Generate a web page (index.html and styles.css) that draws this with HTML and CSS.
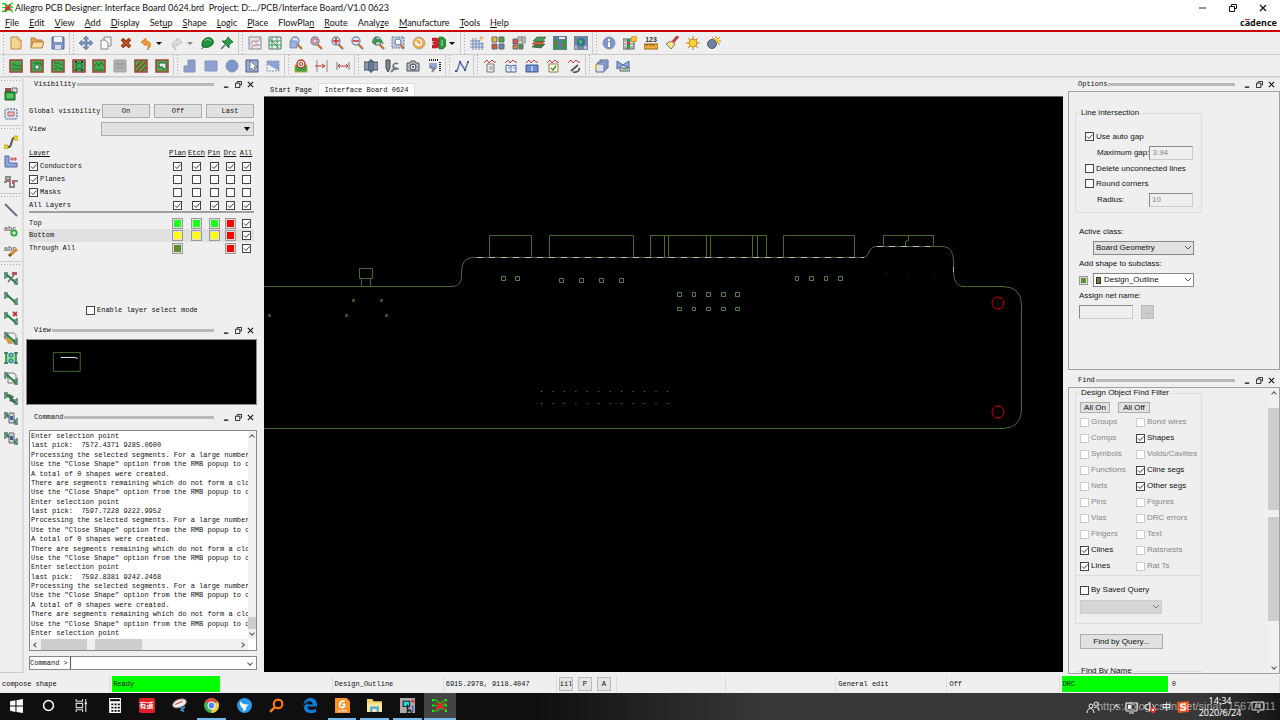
FILE: index.html
```html
<!DOCTYPE html>
<html lang="en">
<head>
    <meta charset="UTF-8">
    <meta name="viewport" content="width=device-width, initial-scale=1.0">
    <title>Allegro PCB Designer</title>
    <link rel="stylesheet" href="styles.css">
</head>
<body>

<!-- icon set -->
<svg class="defs" aria-hidden="true">
    <symbol id="logo" viewBox="0 0 14 14"><path d="M1 2h3l3 3 5-3M1 7h3l4 3h5M1 12h4l8-7" fill="none" stroke="#19b219" stroke-width="1.5"/><path d="M3 3l4 3 5-4-2 5 3 5-5-3-6 4 3-6z" fill="#e3262b"/><path d="M0 1h2v2H0zM0 6h2v2H0zM0 11h2v2H0zM12 1h2v2h-2zM12 6h2v2h-2zM12 11h2v2h-2z" fill="#0f0"/></symbol>
    <symbol id="new" viewBox="0 0 14 14"><path d="M2 1h7l3 3v9H2z" fill="#f7d492" stroke="#b98a45"/><path d="M9 1v3h3" fill="#fff" stroke="#b98a45"/></symbol>
    <symbol id="open" viewBox="0 0 14 14"><path d="M1 12V2h4l1 2h6v3" fill="#e3a85c" stroke="#b5813d"/><path d="M3 6h11l-2 6H1z" fill="#fbdca4" stroke="#b5813d"/></symbol>
    <symbol id="save" viewBox="0 0 14 14"><path d="M1 1h12v12H1z" fill="#7d93c4" stroke="#596c9a"/><path d="M3 1h8v5H3z" fill="#eef2fa"/><path d="M4 9h6v4H4z" fill="#dde"/></symbol>
    <symbol id="move" viewBox="0 0 14 14"><path d="M7 0l3 3H8v3h3V4l3 3-3 3V8H8v3h2l-3 3-3-3h2V8H3v2L0 7l3-3v2h3V3H4z" fill="#7693b8" stroke="#49668e" stroke-width=".5"/></symbol>
    <symbol id="copy" viewBox="0 0 14 14"><path d="M5 1h7v9H5z" fill="#eee" stroke="#888"/><path d="M2 4h4l3 3v6H2z" fill="#fafafa" stroke="#888"/></symbol>
    <symbol id="delete" viewBox="0 0 14 14"><path d="M3 3l8 8M11 3l-8 8" stroke="#6d2408" stroke-width="3.6"/><path d="M3 3l8 8M11 3l-8 8" stroke="#c5531f" stroke-width="1.8"/></symbol>
    <symbol id="undo" viewBox="0 0 14 14"><path d="M2 6l5-4v3c6 0 6 6 1 9 2-4 1-6-1-6v2z" fill="#f09a3e" stroke="#bb6a1c" stroke-width=".6"/></symbol>
    <symbol id="redo" viewBox="0 0 14 14"><path d="M12 6L7 2v3c-6 0-6 6-1 9-2-4-1-6 1-6v2z" fill="#ddd" stroke="#aaa" stroke-width=".6"/></symbol>
    <symbol id="fix" viewBox="0 0 14 14"><path d="M4 11l-3 2" stroke="#666"/><path d="M2 8c0-4 4-7 8-6 4 1 4 5 2 7-3 3-8 3-10 1z" fill="#219440" stroke="#125c26"/><path d="M5 5c1-2 4-2 6 0" fill="none" stroke="#8be29d"/></symbol>
    <symbol id="pin" viewBox="0 0 14 14"><path d="M5 9l-4 4" stroke="#666" stroke-width="1.4"/><path d="M8 1l5 5-2 1-2 2v3L2 5h3l2-2z" fill="#2aa04a" stroke="#125c26" stroke-width=".8"/></symbol>
    <symbol id="grid-red" viewBox="0 0 14 14"><path d="M1 1h12v12H1z" fill="#eceff4" stroke="#7a8696"/><path d="M4 1v12M8 1v12M1 5h12M1 9h12" stroke="#aab6c6" stroke-width=".6"/><path d="M2 8l3-3 4 1 3-4M3 12l4-3h5" fill="none" stroke="#d08080"/></symbol>
    <symbol id="grid-green" viewBox="0 0 14 14"><path d="M1 1h12v12H1z" fill="#eef5ee" stroke="#5a6e78"/><path d="M4 1v12M9 1v12M1 5h12M1 9h12M2 3l9 9" stroke="#3c9b56"/></symbol>
    <symbol id="lens" viewBox="0 0 14 14"><path d="M8 8l5 5" stroke="#c0733a" stroke-width="2.4"/><circle cx="6" cy="5" r="4" fill="#dce9f8" stroke="#7d8cab" stroke-width="1.4"/></symbol>
    <symbol id="zoom-area" viewBox="0 0 14 14"><use href="#lens"/><path d="M1 5h7v7H1z" fill="#9db5dc" stroke="#5d78ab" stroke-width=".7"/></symbol>
    <symbol id="zoom-fit" viewBox="0 0 14 14"><use href="#lens"/><path d="M4 3h4v4H4z" fill="none" stroke="#cc3f4f"/></symbol>
    <symbol id="zoom-in" viewBox="0 0 14 14"><use href="#lens"/><path d="M6 2v6M3 5h6" stroke="#d22" stroke-width="1.5"/></symbol>
    <symbol id="zoom-out" viewBox="0 0 14 14"><use href="#lens"/><path d="M3 5h6" stroke="#d22" stroke-width="1.5"/></symbol>
    <symbol id="zoom-prev" viewBox="0 0 14 14"><use href="#lens"/><path d="M1 6l4-5v2c5 0 7 2 7 5-2-2-4-2-7-2v3z" fill="#36a04b" stroke="#1d6d2e" stroke-width=".5"/></symbol>
    <symbol id="zoom-sel" viewBox="0 0 14 14"><path d="M1 1h12v11H1z" fill="#b9c9dc" stroke="#6a7d96" stroke-dasharray="2 1"/><circle cx="7" cy="6" r="3" fill="#fff" stroke="#6680aa"/><path d="M9 8l4 5" stroke="#c0733a" stroke-width="2"/></symbol>
    <symbol id="redraw" viewBox="0 0 14 14"><circle cx="7" cy="7" r="6" fill="#f2a64c" stroke="#b9a58c"/><path d="M4 5v3h3M4 8a3 3 0 101-4" fill="none" stroke="#fff" stroke-width="1.4"/></symbol>
    <symbol id="three-d" viewBox="0 0 14 14"><path d="M0 2h5l2 1v3L6 7l1 1v3l-2 1H0v-3h3V8H1V6h2V5H0z" fill="#d3202a" stroke="#8d1219" stroke-width=".5"/><path d="M7 1h4l3 3v6l-3 3H7z" fill="#28953d" stroke="#155d24" stroke-width=".5"/><path d="M10 4v6" stroke="#9bdca8" stroke-width="1.2"/></symbol>
    <symbol id="grid-new" viewBox="0 0 14 14"><path d="M3 2v12M6 2v12M9 4v10M12 6v8M0 5h10M0 8h14M0 11h14" stroke="#6b86b9"/><path d="M11 0v5M9 2h5" stroke="#f2a64c"/></symbol>
    <symbol id="palette" viewBox="0 0 14 14"><path d="M1 1h5v5H1z" fill="#e8c028" stroke="#666"/><path d="M8 1h5v5H8z" fill="#4da64d" stroke="#666"/><path d="M1 8h5v5H1z" fill="#cc5d3c" stroke="#666"/><path d="M8 8h5v5H8z" fill="#6883bd" stroke="#666"/></symbol>
    <symbol id="palette-off" viewBox="0 0 14 14"><path d="M1 3h5v5H1z" fill="#d65151" stroke="#666"/><path d="M1 9h5v4H1z" fill="#cc8a3c" stroke="#666"/><path d="M7 8h4v5H7z" fill="#3fa050" stroke="#666"/><path d="M6 0h4v5H6zM10 1h4v6h-4z" fill="#b5b5b5" stroke="#999"/></symbol>
    <symbol id="layers" viewBox="0 0 14 14"><path d="M0 11l4-3h9l-4 4z" fill="#3a7a44" stroke="#254e2b" stroke-width=".6"/><path d="M0 8l4-3h9l-4 4z" fill="#d2603c" stroke="#742" stroke-width=".6"/><path d="M1 5l4-4h9l-4 5z" fill="#49a05a" stroke="#254e2b" stroke-width=".6"/></symbol>
    <symbol id="board-a" viewBox="0 0 14 14"><path d="M0 0h14v14H0z" fill="#607b94"/><path d="M1 4h4v9H1zM9 4h4v9H9z" fill="#2c9b4a"/><path d="M2 6h2v2H2zM10 8h2v2h-2z" fill="#e33"/><path d="M6 1h6v2H6z" fill="#dfeaf5"/></symbol>
    <symbol id="board-b" viewBox="0 0 14 14"><path d="M0 0h14v14H0z" fill="#71879b"/><circle cx="7" cy="6" r="4" fill="#2b69a8"/><path d="M4 5l3-2 2 3-3 3z" fill="#47b35a"/><path d="M1 10h2v3H1zM10 10h3v3h-3z" fill="#bbd"/></symbol>
    <symbol id="info" viewBox="0 0 14 14"><circle cx="7" cy="7" r="6" fill="#7a94cf" stroke="#8a8f9c"/><path d="M7 6v5M7 3v2" stroke="#fff" stroke-width="2"/></symbol>
    <symbol id="report" viewBox="0 0 14 14"><path d="M0 3h11v10H0z" fill="#e4e4e4" stroke="#555"/><path d="M0 5h11M0 8h11M0 11h11" stroke="#777"/><path d="M4 3h3v10H4z" fill="#249c44"/><path d="M4 6h3v2H4z" fill="#d33"/><circle cx="11" cy="3" r="3" fill="#f5c33b" stroke="#a67814" stroke-width=".6"/></symbol>
    <symbol id="measure" viewBox="0 0 14 14"><text x="7" y="6" text-anchor="middle" class="digits">123</text><path d="M0 8h14v5H0z" fill="#eca93f" stroke="#9a6717"/><path d="M3 8v2M6 8v2M9 8v2" stroke="#754b0c"/></symbol>
    <symbol id="brush" viewBox="0 0 14 14"><path d="M8 6l5-6" stroke="#c53a4c" stroke-width="3"/><path d="M1 8l5-3 4 3-4 5z" fill="#f3e2a0" stroke="#8d7a36"/></symbol>
    <symbol id="sun" viewBox="0 0 14 14"><path d="M7 0v14M0 7h14M2 2l10 10M12 2L2 12" stroke="#c77c28"/><circle cx="7" cy="7" r="4" fill="#ffd42f" stroke="#d78b18"/></symbol>
    <symbol id="shadow" viewBox="0 0 14 14"><path d="M9 0v9M4 5h10M5 1l8 8M13 1L7 7" stroke="#c77c28"/><circle cx="9" cy="5" r="3" fill="#ffc52f"/><circle cx="5" cy="8" r="4.5" fill="#71809f" stroke="#525e78"/></symbol>
    <symbol id="pcb" viewBox="0 0 14 14"><path d="M1 1h12v12H1z" fill="#44ab4c" stroke="#a5443b" stroke-width="1.6"/></symbol>
    <symbol id="pcb1" viewBox="0 0 14 14"><use href="#pcb"/><path d="M3 5h3l2 2h4M3 10h9M4 7h2" fill="none" stroke="#17632a" stroke-width=".8"/></symbol>
    <symbol id="pcb2" viewBox="0 0 14 14"><use href="#pcb"/><path d="M3 4h8v3M3 10h2" fill="none" stroke="#17632a" stroke-width=".8"/><circle cx="7" cy="8" r="2.2" fill="#e8f4e8" stroke="#456"/></symbol>
    <symbol id="pcb3" viewBox="0 0 14 14"><use href="#pcb"/><path d="M3 4h4l4 2M3 7h3l3 3h3M3 10h3" fill="none" stroke="#17632a" stroke-width=".8"/></symbol>
    <symbol id="pcb4" viewBox="0 0 14 14"><use href="#pcb"/><path d="M3 3h2M9 3h2M3 11h2M9 11h2" stroke="#124" stroke-width="1.4"/><circle cx="7" cy="7" r="3" fill="none" stroke="#265f5a"/></symbol>
    <symbol id="pcb5" viewBox="0 0 14 14"><use href="#pcb"/><path d="M2 8l3-4 2 3 2-4 3 4M3 11h8" fill="none" stroke="#17632a" stroke-width=".8"/></symbol>
    <symbol id="pcb6" viewBox="0 0 14 14"><path d="M1 1h12v12H1z" fill="#b2b2b2" stroke="#a2a2a2"/><path d="M3 4h3v2H3zM8 4h3v2H8zM3 9h8" fill="none" stroke="#989898"/></symbol>
    <symbol id="pcb7" viewBox="0 0 14 14"><use href="#pcb"/><path d="M2 8l6-6M3 12l9-9M8 12l4-4" stroke="#b12d24" stroke-width="1.2"/></symbol>
    <symbol id="pcb8" viewBox="0 0 14 14"><use href="#pcb"/><path d="M4 4h7v6H8V8H4z" fill="#e5eee5" stroke="#2a5a35"/></symbol>
    <symbol id="poly" viewBox="0 0 14 14"><path d="M5 1h7v12H1V7h4z" fill="#8b9dcf" stroke="#8593b5"/></symbol>
    <symbol id="rect" viewBox="0 0 14 14"><path d="M1 2h12v10H1z" fill="#8fa2d3" stroke="#8593b5"/></symbol>
    <symbol id="circle" viewBox="0 0 14 14"><circle cx="7" cy="7" r="6" fill="#8196cd" stroke="#8593b5"/></symbol>
    <symbol id="select" viewBox="0 0 14 14"><path d="M1 1h12v12H1z" fill="#9aabd6" stroke="#4a5a83"/><path d="M5 2v9l2-2 2 3 1-1-1-3h3z" fill="#fff" stroke="#444" stroke-width=".6"/></symbol>
    <symbol id="void" viewBox="0 0 14 14"><path d="M1 2h12v10L1 5z" fill="#8fa2d3"/><path d="M1 2h12v10H1z" fill="none" stroke="#8593b5" stroke-dasharray="2 1"/></symbol>
    <symbol id="drc" viewBox="0 0 14 14"><path d="M1 6h12v7H1z" fill="#35a54b" stroke="#d5a32a"/><circle cx="7" cy="5" r="4" fill="#dfe9cf" stroke="#c43a32" stroke-width="1.4"/><circle cx="7" cy="5" r="1.6" fill="none" stroke="#c43a32"/></symbol>
    <symbol id="dim-a" viewBox="0 0 14 14"><path d="M2 1v12M12 1v12" stroke="#888"/><path d="M0 7h9M7 5l3 2-3 2" fill="none" stroke="#c4382f"/></symbol>
    <symbol id="dim-b" viewBox="0 0 14 14"><path d="M1 3v8M13 3v8" stroke="#777"/><path d="M2 7h10M4 5L2 7l2 2M10 5l2 2-2 2" fill="none" stroke="#c4382f"/></symbol>
    <symbol id="flip" viewBox="0 0 14 14"><path d="M0 3h5v8H0zM9 3h5v8H9z" fill="#8a97a8" stroke="#4c5663"/><path d="M5 2h4v10H5z" fill="#9cb9ea" stroke="#3d4b66"/><path d="M7 0v14" stroke="#333"/></symbol>
    <symbol id="wrench" viewBox="0 0 14 14"><path d="M1 1h4v8l-2 4-2-4z" fill="#7f8993" stroke="#444"/><path d="M6 13l5-5" stroke="#7b848d" stroke-width="2.4"/><path d="M13 5a3 3 0 10.5 4" fill="none" stroke="#6b747d" stroke-width="1.6"/></symbol>
    <symbol id="camera" viewBox="0 0 14 14"><path d="M1 4h3l1-2h4l1 2h3v8H1z" fill="#b4bac2" stroke="#555"/><circle cx="7" cy="8" r="3" fill="#e6eefa" stroke="#444"/><circle cx="7" cy="8" r="1.2" fill="#57637b"/></symbol>
    <symbol id="chip-fix" viewBox="0 0 14 14"><path d="M2 1h9M13 3v9" stroke="#222" stroke-width="2" stroke-dasharray="1 1"/><path d="M2 4h8v5H2z" fill="#91a9da"/><path d="M5 13l4-5M3 7l3 3" stroke="#78818c" stroke-width="2"/></symbol>
    <symbol id="wave" viewBox="0 0 14 14"><path d="M1 12h1l3-9 5 8 3-8" fill="none" stroke="#6079ab" stroke-width="1.5"/><path d="M0 11h2v2H0zM4 2h2v2H4zM9 10h2v2H9zM12 2h2v2h-2z" fill="#405b90"/></symbol>
    <symbol id="zig" viewBox="0 0 14 14"><path d="M1 4l3-3 2 3 3-3 2 2h2" fill="none" stroke="#c93b3b"/></symbol>
    <symbol id="sig1" viewBox="0 0 14 14"><path d="M4 5h7v8H4z" fill="#eee" stroke="#777"/><path d="M6 8h4M6 10h4" stroke="#888"/><use href="#zig"/></symbol>
    <symbol id="sig2" viewBox="0 0 14 14"><path d="M2 6l5 1 5-1v7H2z" fill="#e6efff" stroke="#4a679c"/><path d="M7 7v6M4 9h2M9 9h2" stroke="#4a679c" stroke-width=".8"/><use href="#zig"/></symbol>
    <symbol id="sig3" viewBox="0 0 14 14"><path d="M1 6h12v7H1z" fill="#6f8fd2" stroke="#405a91"/><path d="M7 7v5" stroke="#fff"/><use href="#zig"/></symbol>
    <symbol id="sig4" viewBox="0 0 14 14"><path d="M3 5h9v8H3z" fill="#fffbe8" stroke="#9a7b3d"/><path d="M5 9l2 2 3-4" fill="none" stroke="#258a3a" stroke-width="1.3"/><use href="#zig"/></symbol>
    <symbol id="sig5" viewBox="0 0 14 14"><path d="M4 12l7-6M6 13c4 1 7-2 6-4" fill="none" stroke="#555" stroke-width="1.8"/><use href="#zig"/></symbol>
    <symbol id="pages" viewBox="0 0 14 14"><path d="M5 1h8v8H5z" fill="#a4b8e3" stroke="#516799"/><path d="M3 3h8v8H3z" fill="#bccbed" stroke="#516799"/><path d="M1 5h8v8H1z" fill="#dae3f6" stroke="#516799"/><path d="M0 5h2v6H0z" fill="#e0b842"/></symbol>
    <symbol id="mill" viewBox="0 0 14 14"><path d="M1 2l6 4 6-4v7L7 6 1 10z" fill="#90aae0" stroke="#4c669e"/><path d="M4 9h10v3H4z" fill="#dfe6df" stroke="#556"/><path d="M7 10h5" stroke="#2a9b45"/></symbol>
    <symbol id="place" viewBox="0 0 14 14"><path d="M1 1h6v5H1z" fill="#9b4f4f"/><path d="M8 1h5v5H8z" fill="#d7dbe0" stroke="#666"/><path d="M1 5h10v8H1z" fill="#2fa83c" stroke="#186325"/><path d="M3 8h6M3 10h6" stroke="#8fdc98"/></symbol>
    <symbol id="part" viewBox="0 0 14 14"><rect x="1" y="2" width="12" height="10" rx="2" fill="#dfe6f0" stroke="#6e87a8" stroke-width="1.5" stroke-dasharray="2 1"/><path d="M4 5h6v4H4z" fill="#e9bcbc" stroke="#b66"/></symbol>
    <symbol id="route" viewBox="0 0 14 14"><path d="M2 12h3c3 0 2-9 5-9h3" fill="none" stroke="#555" stroke-width="2"/><path d="M0 10h4v4H0zM10 1h4v4h-4z" fill="#ecd52d" stroke="#988616" stroke-width=".5"/></symbol>
    <symbol id="slide" viewBox="0 0 14 14"><path d="M1 1v11h12V8H5V1z" fill="#8da6dc" stroke="#4e6aa3"/><path d="M6 4h7M8 2v4M11 2v4" stroke="#b44"/></symbol>
    <symbol id="delay" viewBox="0 0 14 14"><path d="M0 7h2V2h4v10h4V6h4" fill="none" stroke="#888" stroke-width="2"/><path d="M3 4h2v3H3zM8 5h2v4H8z" fill="#c55"/></symbol>
    <symbol id="line" viewBox="0 0 14 14"><path d="M1 1l12 12" stroke="#626f86" stroke-width="2"/></symbol>
    <symbol id="abc" viewBox="0 0 14 14"><text x="0" y="8" class="letters">abc</text></symbol>
    <symbol id="abc-add" viewBox="0 0 14 14"><use href="#abc"/><circle cx="10" cy="10" r="3.6" fill="#35a441"/><path d="M10 8v4M8 10h4" stroke="#fff"/></symbol>
    <symbol id="abc-edit" viewBox="0 0 14 14"><use href="#abc"/><path d="M5 13l8-7" stroke="#d98c2c" stroke-width="3"/><path d="M5 13l2-2" stroke="#553" stroke-width="2"/></symbol>
    <symbol id="net" viewBox="0 0 14 14"><path d="M1 1v7M0 2h4M0 6h4M13 7v7M10 9h4M10 13h4" stroke="#5f8a76" stroke-width="1.6"/><path d="M2 3l10 9" stroke="#268244" stroke-width="2.2"/></symbol>
    <symbol id="net-pin" viewBox="0 0 14 14"><use href="#net"/><path d="M8 1h5v3H8z" fill="#b5555a"/><path d="M4 11l6-7" stroke="#666" stroke-width="1.4"/></symbol>
    <symbol id="net-del" viewBox="0 0 14 14"><use href="#net"/><path d="M9 1l4 4M13 1L9 5" stroke="#c23a32" stroke-width="1.8"/></symbol>
    <symbol id="net-edit" viewBox="0 0 14 14"><path d="M4 2h6l2 2v8H4z" fill="#eee" stroke="#888"/><use href="#net"/><path d="M2 7l6 5" stroke="#dd923b" stroke-width="3"/></symbol>
    <symbol id="net-on" viewBox="0 0 14 14"><path d="M2 2h10v10H2z" fill="#7be88a"/><path d="M0 2h4M0 12h4M10 2h4M10 12h4M2 1v12M12 1v12" stroke="#2e7c49" stroke-width="1.5"/><circle cx="7" cy="4" r="2" fill="#8cabdf" stroke="#44679f"/><circle cx="7" cy="10" r="2" fill="#8cabdf" stroke="#44679f"/></symbol>
    <symbol id="net-doc" viewBox="0 0 14 14"><path d="M4 2h6l2 2v8H4z" fill="#eee" stroke="#777"/><use href="#net"/></symbol>
    <symbol id="net-dark" viewBox="0 0 14 14"><path d="M4 4l4 2-1 3 4 2" fill="none" stroke="#666" stroke-width="3"/><use href="#net"/></symbol>
    <symbol id="net-part" viewBox="0 0 14 14"><use href="#net"/><path d="M5 2h5v10H5z" fill="#cbd3de" stroke="#666"/><path d="M6 5h3v4H6z" fill="#3e5f9e"/></symbol>
    <symbol id="windows" viewBox="0 0 14 14"><path d="M1 3l5-1v5H1zM7 2l6-1v6H7zM1 8h5v5l-5-1zM7 8h6v6l-6-1z" fill="#fff"/></symbol>
    <symbol id="cortana" viewBox="0 0 14 14"><circle cx="7" cy="7" r="4.6" fill="none" stroke="#fff" stroke-width="1.4"/></symbol>
    <symbol id="taskview" viewBox="0 0 14 14"><path d="M2 1v2h6V1M2 13v-2h6v2M2 5h6v4H2zM11 1v3M11 6v7" fill="none" stroke="#ddd"/><path d="M10 4h2v2h-2z" fill="#fff"/></symbol>
    <symbol id="calc" viewBox="0 0 14 14"><path d="M2 0h11v14H2z" fill="#fff"/><path d="M3 2h9" stroke="#111" stroke-width="2"/><path d="M4 6h8M4 9h8M4 12h8" stroke="#111" stroke-width="1.6" stroke-dasharray="2 1"/></symbol>
    <symbol id="dish" viewBox="0 0 14 14"><ellipse cx="7" cy="5" rx="6.5" ry="3.6" fill="#eee" stroke="#b99" transform="rotate(-20 7 5)"/><path d="M3 6l7-3" stroke="#c44"/><path d="M8 8l3 5M12 8l-4 4" stroke="#3c9bd6" stroke-width="1.5"/></symbol>
    <symbol id="chrome" viewBox="0 0 14 14"><circle cx="7" cy="7" r="7" fill="#3cae50"/><path d="M7 7L1 3.5A7 7 0 0113 3.5z" fill="#e2493a"/><path d="M7 7l6-3.5A7 7 0 017 14z" fill="#f9cb36"/><circle cx="7" cy="7" r="3.2" fill="#4a8af0" stroke="#fff"/></symbol>
    <symbol id="bird" viewBox="0 0 14 14"><circle cx="7" cy="7" r="7" fill="#2b97e8"/><path d="M3 3c2 3 5 3 8 3l-3 3 1 1-3 3 0-3c-2-1-4-4-3-7z" fill="#fff"/></symbol>
    <symbol id="search" viewBox="0 0 14 14"><circle cx="8.5" cy="5.5" r="4" fill="none" stroke="#ff7d0d" stroke-width="2"/><path d="M5 9l-4 4" stroke="#ff7d0d" stroke-width="2.4"/></symbol>
    <symbol id="edge" viewBox="0 0 14 14"><path d="M1 7C2 2 5 0 8 0c4 0 6 3 6 6v2H5c0 4 5 4 8 2v3C7 16 1 13 2 8c1-2 2-3 4-4-1 1-1 1-1 2h5c0-4-6-4-9 1z" fill="#0f7edb"/></symbol>
    <symbol id="pdf" viewBox="0 0 14 14"><path d="M0 0h11l3 3v11H0z" fill="#f8922b"/><path d="M9 3C4 2 3 8 6 9c3 0 3-2 3-3H7" fill="none" stroke="#fff" stroke-width="1.6"/><path d="M3 12h8" stroke="#fff" stroke-dasharray="2 1"/></symbol>
    <symbol id="folder" viewBox="0 0 14 14"><path d="M0 1h5l1 2h8v10H0z" fill="#f4cf6a"/><path d="M0 5h14v8H0z" fill="#fbe49c"/><path d="M3 13V8h8v5H9v-3H5v3z" fill="#48a8de"/></symbol>
    <symbol id="capture" viewBox="0 0 14 14"><path d="M0 0h14v14H0z" fill="#aaa"/><path d="M3 3h6v5H3z" fill="#1de0e5" stroke="#222"/><path d="M7 6v7l2-2 2 3" fill="none" stroke="#222" stroke-width="1.4"/><path d="M12 1v4M10 3h4" stroke="#d33"/><path d="M12 7v6" stroke="#33c"/></symbol>
    <symbol id="people" viewBox="0 0 14 14"><circle cx="5" cy="6" r="2" fill="none" stroke="#eee"/><circle cx="10" cy="4" r="2" fill="none" stroke="#eee"/><path d="M1 13c0-6 7-6 7 0M8 8c3-2 5 0 5 3" fill="none" stroke="#eee"/></symbol>
    <symbol id="keyboard" viewBox="0 0 14 14"><path d="M2 3h11v8H2zM5 13h5" fill="none" stroke="#eee"/><path d="M4 5h3v4H4z" fill="#eee"/></symbol>
    <symbol id="speaker" viewBox="0 0 14 14"><path d="M2 5h2l3-3v9L4 9H2zM9 4c2 1 2 4 0 5" fill="none" stroke="#eee"/><circle cx="10" cy="10" r="3" fill="#e33"/><path d="M9 9l2 2M11 9l-2 2" stroke="#fff" stroke-width=".8"/></symbol>
    <symbol id="sogou" viewBox="0 0 14 14"><path d="M1 2l12-1v11L2 13z" fill="#f4511e"/><path d="M10 4H6C4 4 4 7 7 7s3 3 1 3H4" fill="none" stroke="#fff" stroke-width="1.6"/></symbol>
    <symbol id="notice" viewBox="0 0 14 14"><path d="M1 2h12v8H9l-2 3v-3H1zM4 5h6M4 7h6" fill="none" stroke="#ccc"/></symbol>
    <symbol id="restore" viewBox="0 0 8 8"><path d="M2.5 2V.5h5v4H6M.5 2.5h5v5h-5z" fill="none" stroke="#111"/></symbol>
    <symbol id="close" viewBox="0 0 8 8"><path d="M1 1l6 6M7 1L1 7" stroke="#111" stroke-width="1.2"/></symbol>
    <symbol id="minimize" viewBox="0 0 8 8"><path d="M1 7h5" stroke="#111" stroke-width="1.5"/></symbol>
</svg>

<header class="titlebar">
    <svg class="app-logo"><use href="#logo"/></svg>
    <span class="app-title">Allegro PCB Designer: Interface Board 0624.brd&nbsp; Project: D:.../PCB/Interface Board/V1.0 0623</span>
    <div class="window-buttons">
        <button aria-label="Minimize"><svg><path d="M0 4h7" stroke="#999" stroke-width="2"/></svg></button>
        <button aria-label="Restore"><svg><use href="#restore"/></svg></button>
        <button aria-label="Close"><svg><use href="#close"/></svg></button>
    </div>
</header>

<nav class="menubar">
    <a href="#"><u>F</u>ile</a>
    <a href="#"><u>E</u>dit</a>
    <a href="#"><u>V</u>iew</a>
    <a href="#"><u>A</u>dd</a>
    <a href="#"><u>D</u>isplay</a>
    <a href="#">Set<u>u</u>p</a>
    <a href="#"><u>S</u>hape</a>
    <a href="#"><u>L</u>ogic</a>
    <a href="#"><u>P</u>lace</a>
    <a href="#">FlowPla<u>n</u></a>
    <a href="#"><u>R</u>oute</a>
    <a href="#">Analy<u>z</u>e</a>
    <a href="#"><u>M</u>anufacture</a>
    <a href="#"><u>T</u>ools</a>
    <a href="#"><u>H</u>elp</a>
    <span class="brand">c<span class="macron">a</span>dence</span>
</nav>

<div class="toolbar">
    <div class="group g-file">
        <button aria-label="New"><svg><use href="#new"/></svg></button>
        <button aria-label="Open"><svg><use href="#open"/></svg></button>
        <button aria-label="Save"><svg><use href="#save"/></svg></button>
    </div>
    <div class="group g-edit">
        <button aria-label="Move"><svg><use href="#move"/></svg></button>
        <button aria-label="Copy"><svg><use href="#copy"/></svg></button>
        <button aria-label="Delete"><svg><use href="#delete"/></svg></button>
        <button class="split" aria-label="Undo"><svg><use href="#undo"/></svg></button>
        <button class="split off" aria-label="Redo"><svg><use href="#redo"/></svg></button>
        <button aria-label="Fix"><svg><use href="#fix"/></svg></button>
        <button aria-label="Unfix"><svg><use href="#pin"/></svg></button>
    </div>
    <div class="group g-view">
        <button aria-label="Unrats all"><svg><use href="#grid-red"/></svg></button>
        <button aria-label="Rats all"><svg><use href="#grid-green"/></svg></button>
        <button aria-label="Zoom points"><svg><use href="#zoom-area"/></svg></button>
        <button aria-label="Zoom fit"><svg><use href="#zoom-fit"/></svg></button>
        <button aria-label="Zoom in"><svg><use href="#zoom-in"/></svg></button>
        <button aria-label="Zoom out"><svg><use href="#zoom-out"/></svg></button>
        <button aria-label="Zoom previous"><svg><use href="#zoom-prev"/></svg></button>
        <button aria-label="Zoom selection"><svg><use href="#zoom-sel"/></svg></button>
        <button aria-label="Redraw"><svg><use href="#redraw"/></svg></button>
        <button class="split" aria-label="3D view"><svg><use href="#three-d"/></svg></button>
    </div>
    <div class="group g-setup">
        <button aria-label="Grid"><svg><use href="#grid-new"/></svg></button>
        <button aria-label="Color"><svg><use href="#palette"/></svg></button>
        <button aria-label="Dehighlight color"><svg><use href="#palette-off"/></svg></button>
        <button aria-label="Cross section"><svg><use href="#layers"/></svg></button>
        <button aria-label="Constraints"><svg><use href="#board-a"/></svg></button>
        <button aria-label="World view"><svg><use href="#board-b"/></svg></button>
    </div>
    <div class="group g-display">
        <button aria-label="Show element"><svg><use href="#info"/></svg></button>
        <button aria-label="Report"><svg><use href="#report"/></svg></button>
        <button aria-label="Measure"><svg><use href="#measure"/></svg></button>
        <button aria-label="Highlight"><svg><use href="#brush"/></svg></button>
        <button aria-label="Bright"><svg><use href="#sun"/></svg></button>
        <button aria-label="Shadow"><svg><use href="#shadow"/></svg></button>
    </div>
</div>

<div class="toolbar">
    <div class="group g-mode">
        <button aria-label="General edit"><svg><use href="#pcb1"/></svg></button>
        <button aria-label="Placement edit"><svg><use href="#pcb2"/></svg></button>
        <button aria-label="Etch edit"><svg><use href="#pcb3"/></svg></button>
        <button aria-label="Flow planning"><svg><use href="#pcb4"/></svg></button>
        <button aria-label="Signal integrity"><svg><use href="#pcb5"/></svg></button>
        <button aria-label="RF edit" disabled><svg><use href="#pcb6"/></svg></button>
        <button aria-label="Shape check"><svg><use href="#pcb7"/></svg></button>
        <button aria-label="Shape edit"><svg><use href="#pcb8"/></svg></button>
    </div>
    <div class="group g-shape">
        <button aria-label="Shape polygon"><svg><use href="#poly"/></svg></button>
        <button aria-label="Shape rectangle"><svg><use href="#rect"/></svg></button>
        <button aria-label="Shape circle"><svg><use href="#circle"/></svg></button>
        <button aria-label="Shape select"><svg><use href="#select"/></svg></button>
        <button aria-label="Shape void"><svg><use href="#void"/></svg></button>
    </div>
    <div class="group g-dim">
        <button aria-label="DRC"><svg><use href="#drc"/></svg></button>
        <button aria-label="Spacing"><svg><use href="#dim-a"/></svg></button>
        <button aria-label="Dimension"><svg><use href="#dim-b"/></svg></button>
    </div>
    <div class="group g-misc">
        <button aria-label="Flip design"><svg><use href="#flip"/></svg></button>
        <button aria-label="Tools"><svg><use href="#wrench"/></svg></button>
        <button aria-label="Snapshot"><svg><use href="#camera"/></svg></button>
        <button aria-label="Component setup"><svg><use href="#chip-fix"/></svg></button>
    </div>
    <div class="group g-wave">
        <button aria-label="Waveform"><svg><use href="#wave"/></svg></button>
    </div>
    <div class="group g-signal">
        <button aria-label="Signal report"><svg><use href="#sig1"/></svg></button>
        <button aria-label="Signal library"><svg><use href="#sig2"/></svg></button>
        <button aria-label="Signal model"><svg><use href="#sig3"/></svg></button>
        <button aria-label="Signal audit"><svg><use href="#sig4"/></svg></button>
        <button aria-label="Signal probe"><svg><use href="#sig5"/></svg></button>
    </div>
    <div class="group g-fab">
        <button aria-label="Artwork"><svg><use href="#pages"/></svg></button>
        <button aria-label="NC drill"><svg><use href="#mill"/></svg></button>
    </div>
</div>

<main class="workspace">
    <aside class="side-tools">
        <div class="stack">
            <button aria-label="Place manual"><svg><use href="#place"/></svg></button>
            <button aria-label="Edit part"><svg><use href="#part"/></svg></button>
        </div>
        <div class="stack">
            <button aria-label="Add connect"><svg><use href="#route"/></svg></button>
            <button aria-label="Slide"><svg><use href="#slide"/></svg></button>
            <button aria-label="Delay tune"><svg><use href="#delay"/></svg></button>
        </div>
        <div class="stack">
            <button aria-label="Add line"><svg><use href="#line"/></svg></button>
            <button aria-label="Add text"><svg><use href="#abc-add"/></svg></button>
            <button aria-label="Edit text"><svg><use href="#abc-edit"/></svg></button>
        </div>
        <div class="stack">
            <button aria-label="Net pin"><svg><use href="#net-pin"/></svg></button>
            <button aria-label="Net"><svg><use href="#net"/></svg></button>
            <button aria-label="Delete net"><svg><use href="#net-del"/></svg></button>
            <button aria-label="Edit net"><svg><use href="#net-edit"/></svg></button>
            <button aria-label="Net groups"><svg><use href="#net-on"/></svg></button>
            <button aria-label="Net document"><svg><use href="#net-doc"/></svg></button>
            <button aria-label="Net path"><svg><use href="#net-dark"/></svg></button>
            <button aria-label="Net part"><svg><use href="#net-part"/></svg></button>
            <button aria-label="Net part list"><svg><use href="#net-part"/></svg></button>
        </div>
    </aside>

    <section class="dock dock-left">
        <div class="dock-title">
            <h2>Visibility</h2><span class="grip"></span>
            <button aria-label="Minimize"><svg><use href="#minimize"/></svg></button>
            <button aria-label="Float"><svg><use href="#restore"/></svg></button>
            <button aria-label="Close"><svg><use href="#close"/></svg></button>
        </div>
        <div class="visibility">
            <div class="global-row">
                <span>Global visibility</span>
                <button class="btn">On</button>
                <button class="btn">Off</button>
                <button class="btn">Last</button>
            </div>
            <div class="view-row">
                <label for="view">View</label>
                <select id="view" class="combo-solid"><option></option></select>
            </div>
            <table class="layers">
                <thead>
                    <tr><th class="name">Layer</th><th>Plan</th><th>Etch</th><th>Pin</th><th>Drc</th><th>All</th></tr>
                </thead>
                <tbody>
                    <tr><td class="name"><label><input type="checkbox" checked>Conductors</label></td><td><input type="checkbox" aria-label="Conductors plan" checked></td><td><input type="checkbox" aria-label="Conductors etch" checked></td><td><input type="checkbox" aria-label="Conductors pin" checked></td><td><input type="checkbox" aria-label="Conductors drc" checked></td><td><input type="checkbox" aria-label="Conductors all" checked></td></tr>
                    <tr><td class="name"><label><input type="checkbox" checked>Planes</label></td><td><input type="checkbox" aria-label="Planes plan"></td><td><input type="checkbox" aria-label="Planes etch"></td><td><input type="checkbox" aria-label="Planes pin"></td><td><input type="checkbox" aria-label="Planes drc"></td><td><input type="checkbox" aria-label="Planes all"></td></tr>
                    <tr><td class="name"><label><input type="checkbox" checked>Masks</label></td><td><input type="checkbox" aria-label="Masks plan"></td><td><input type="checkbox" aria-label="Masks etch"></td><td><input type="checkbox" aria-label="Masks pin"></td><td><input type="checkbox" aria-label="Masks drc"></td><td><input type="checkbox" aria-label="Masks all"></td></tr>
                    <tr><td class="name">All Layers</td><td><input type="checkbox" aria-label="All layers plan" checked></td><td><input type="checkbox" aria-label="All layers etch" checked></td><td><input type="checkbox" aria-label="All layers pin" checked></td><td><input type="checkbox" aria-label="All layers drc" checked></td><td><input type="checkbox" aria-label="All layers all" checked></td></tr>
                </tbody>
                <tbody class="colors">
                    <tr class="first"><td class="name">Top</td><td><button class="swatch green" aria-label="Top plan"></button></td><td><button class="swatch green" aria-label="Top etch"></button></td><td><button class="swatch green" aria-label="Top pin"></button></td><td><button class="swatch red" aria-label="Top drc"></button></td><td><input type="checkbox" aria-label="Top all" checked></td></tr>
                    <tr class="current"><td class="name">Bottom</td><td><button class="swatch yellow" aria-label="Bottom plan"></button></td><td><button class="swatch yellow" aria-label="Bottom etch"></button></td><td><button class="swatch yellow" aria-label="Bottom pin"></button></td><td><button class="swatch red" aria-label="Bottom drc"></button></td><td><input type="checkbox" aria-label="Bottom all" checked></td></tr>
                    <tr><td class="name">Through All</td><td><button class="swatch olive" aria-label="Through plan"></button></td><td></td><td></td><td><button class="swatch red" aria-label="Through drc"></button></td><td><input type="checkbox" aria-label="Through all" checked></td></tr>
                </tbody>
            </table>
            <label class="layer-select"><input type="checkbox">Enable layer select mode</label>
        </div>

        <div class="dock-title">
            <h2>View</h2><span class="grip"></span>
            <button aria-label="Minimize"><svg><use href="#minimize"/></svg></button>
            <button aria-label="Float"><svg><use href="#restore"/></svg></button>
            <button aria-label="Close"><svg><use href="#close"/></svg></button>
        </div>
        <div class="overview">
            <svg viewBox="0 0 230 65" preserveAspectRatio="xMinYMin">
                <path d="M26.500 12.500h27v19h-27z" fill="none" stroke="#45682a"/>
                <path d="M34 17.500h14l3 1" fill="none" stroke="#eee"/>
            </svg>
        </div>

        <div class="dock-title">
            <h2>Command</h2><span class="grip"></span>
            <button aria-label="Minimize"><svg><use href="#minimize"/></svg></button>
            <button aria-label="Float"><svg><use href="#restore"/></svg></button>
            <button aria-label="Close"><svg><use href="#close"/></svg></button>
        </div>
        <div class="console">
            <div class="log">
                <p>Enter selection point</p>
                <p>last pick:  7572.4371 9285.0600</p>
                <p>Processing the selected segments. For a large number</p>
                <p>Use the "Close Shape" option from the RMB popup to cl</p>
                <p>A total of 0 shapes were created.</p>
                <p>There are segments remaining which do not form a clos</p>
                <p>Use the "Close Shape" option from the RMB popup to cl</p>
                <p>Enter selection point</p>
                <p>last pick:  7597.7228 9222.9952</p>
                <p>Processing the selected segments. For a large number</p>
                <p>Use the "Close Shape" option from the RMB popup to cl</p>
                <p>A total of 0 shapes were created.</p>
                <p>There are segments remaining which do not form a clos</p>
                <p>Use the "Close Shape" option from the RMB popup to cl</p>
                <p>Enter selection point</p>
                <p>last pick:  7592.8381 9242.2468</p>
                <p>Processing the selected segments. For a large number</p>
                <p>Use the "Close Shape" option from the RMB popup to cl</p>
                <p>A total of 0 shapes were created.</p>
                <p>There are segments remaining which do not form a clos</p>
                <p>Use the "Close Shape" option from the RMB popup to cl</p>
                <p>Enter selection point</p>
            </div>
            <div class="vscroll"><i class="arrow up"></i><i class="thumb"></i><i class="arrow down"></i></div>
            <div class="hscroll"><i class="arrow left"></i><i class="thumb"></i><i class="arrow right"></i></div>
        </div>
        <div class="prompt">
            <label for="cmd">Command &gt;</label>
            <input id="cmd" type="text">
            <i class="arrow down"></i>
        </div>
    </section>

    <section class="editor">
        <div class="tabs">
            <button>Start Page</button>
            <button class="active">Interface Board 0624</button>
        </div>
        <svg class="board" viewBox="264 97 799 575" preserveAspectRatio="xMidYMid slice">
            <g class="trace">
                <path d="M264 286.500H452Q461.500 286.500 461.500 276V272Q461.500 257.500 473 257.500H864Q867 257 869 252T875 246.500H944Q953.500 248 953.500 261V272Q954 285 962 286.500H1003Q1021.500 287 1021.500 305V411Q1020 428 1003 428.500H264"/>
                <path d="M489.500 257V235.500h42V257M549.500 257V235.500h84V257M650.500 257V235.500h116V257M664.500 236v21M668.500 236v21M706.500 236v21M710.500 236v21M752.500 236v21M757.500 236v21M783.500 257V235.500h71V257M883.500 246V235.500h50V246M905.500 246v-5h3v-5"/>
                <path d="M359.500 268.500h13v10h-13zM361.500 279v7M370.500 279v7"/>
            </g>
            <g class="pads">
                <path d="M501.500 276.500h4v4h-4zM515.500 276.500h4v4h-4zM559.500 278.500h4v4h-4zM579.500 278.500h4v4h-4zM599.500 278.500h4v4h-4zM619.500 278.500h4v4h-4z"/>
                <path d="M795.500 276.500h3v4h-3zM809.500 276.500h4v4h-4zM824.500 276.500h3v4h-3zM838.500 276.500h4v4h-4z"/>
                <path d="M677.500 292.500h4v4h-4zM692.500 292.500h3v4h-3zM706.500 292.500h4v4h-4zM721.500 292.500h4v4h-4zM735.500 292.500h4v4h-4z"/>
                <path d="M677.500 307.500h4v3h-4zM692.500 307.500h3v3h-3zM706.500 307.500h4v3h-4zM721.500 307.500h4v3h-4zM735.500 307.500h4v3h-4z"/>
            </g>
            <path class="dots" d="M352 299h3v3h-3zM380 299h3v3h-3zM345 314h3v3h-3zM385 314h3v3h-3zM268 314h3v3h-3z"/>
            <path class="vias" d="M541 391.500h128M541 403.500h128"/>
            <path class="dots faint" d="M886 273h1v1h-1zM907 277h1v1h-1zM933 273h1v1h-1z"/>
            <path class="highlight" d="M477 257.500H864M877 246.500H930M953.500 267v5"/>
            <circle class="hole" cx="998" cy="303" r="6"/>
            <circle class="hole" cx="998" cy="412" r="6"/>
        </svg>
    </section>

    <section class="dock dock-right">
        <div class="dock-title">
            <h2>Options</h2><span class="grip"></span>
            <button aria-label="Minimize"><svg><use href="#minimize"/></svg></button>
            <button aria-label="Float"><svg><use href="#restore"/></svg></button>
            <button aria-label="Close"><svg><use href="#close"/></svg></button>
        </div>
        <div class="options">
            <fieldset class="line-box">
                <legend>Line intersection</legend>
                <label><input type="checkbox" checked>Use auto gap</label>
                <div class="field"><label for="gap">Maximum gap:</label><input id="gap" type="text" value="3.94" disabled></div>
                <label><input type="checkbox">Delete unconnected lines</label>
                <label><input type="checkbox">Round corners</label>
                <div class="field"><label for="radius">Radius:</label><input id="radius" type="text" value="10" disabled></div>
            </fieldset>
            <label for="class">Active class:</label>
            <div class="choice"><select id="class" class="grey"><option>Board Geometry</option></select></div>
            <label for="subclass">Add shape to subclass:</label>
            <div class="choice">
                <span class="swatch olive"></span>
                <span class="chip"></span>
                <select id="subclass" class="with-chip"><option>Design_Outline</option></select>
            </div>
            <label for="net-name">Assign net name:</label>
            <div class="net-row">
                <input id="net-name" type="text" disabled>
                <button disabled>...</button>
            </div>
        </div>

        <div class="dock-title find-title">
            <h2>Find</h2><span class="grip"></span>
            <button aria-label="Minimize"><svg><use href="#minimize"/></svg></button>
            <button aria-label="Float"><svg><use href="#restore"/></svg></button>
            <button aria-label="Close"><svg><use href="#close"/></svg></button>
        </div>
        <div class="find">
            <div class="find-body">
                <fieldset class="filter">
                    <legend>Design Object Find Filter</legend>
                    <div class="all-row"><button class="btn">All On</button><button class="btn">All Off</button></div>
                    <div class="filter-grid">
                        <label><input type="checkbox" disabled>Groups</label>
                        <label><input type="checkbox" disabled>Bond wires</label>
                        <label><input type="checkbox" disabled>Comps</label>
                        <label><input type="checkbox" checked>Shapes</label>
                        <label><input type="checkbox" disabled>Symbols</label>
                        <label><input type="checkbox" disabled>Voids/Cavities</label>
                        <label><input type="checkbox" disabled>Functions</label>
                        <label><input type="checkbox" checked>Cline segs</label>
                        <label><input type="checkbox" disabled>Nets</label>
                        <label><input type="checkbox" checked>Other segs</label>
                        <label><input type="checkbox" disabled>Pins</label>
                        <label><input type="checkbox" disabled>Figures</label>
                        <label><input type="checkbox" disabled>Vias</label>
                        <label><input type="checkbox" disabled>DRC errors</label>
                        <label><input type="checkbox" disabled>Fingers</label>
                        <label><input type="checkbox" disabled>Text</label>
                        <label><input type="checkbox" checked>Clines</label>
                        <label><input type="checkbox" disabled>Ratsnests</label>
                        <label><input type="checkbox" checked>Lines</label>
                        <label><input type="checkbox" disabled>Rat Ts</label>
                    </div>
                    <div class="saved">
                        <label><input type="checkbox">By Saved Query</label>
                        <select aria-label="Saved query" disabled><option></option></select>
                    </div>
                </fieldset>
                <button class="btn query">Find by Query...</button>
                <fieldset class="by-name"><legend>Find By Name</legend></fieldset>
            </div>
            <div class="vscroll"><i class="arrow up"></i><i class="thumb"></i><i class="arrow down"></i></div>
        </div>
    </section>
</main>

<footer class="statusbar">
    <span>compose shape</span>
    <span class="ok">Ready</span>
    <span></span>
    <span>Design_Outline</span>
    <span>6915.2978, 9118.4047</span>
    <span class="keys"><button>iil</button><button>P</button><button>A</button></span>
    <span></span>
    <span></span>
    <span>General edit</span>
    <span>Off</span>
    <span class="ok">DRC</span>
    <span>0</span>
</footer>

<div class="taskbar">
    <div class="apps">
        <button aria-label="Start"><svg><use href="#windows"/></svg></button>
        <button aria-label="Cortana"><svg><use href="#cortana"/></svg></button>
        <button aria-label="Task view"><svg><use href="#taskview"/></svg></button>
        <button aria-label="Calculator"><svg><use href="#calc"/></svg></button>
        <button aria-label="Dictionary"><span class="youdao">有道</span></button>
        <button aria-label="Snip"><svg><use href="#dish"/></svg></button>
        <button class="running" aria-label="Chrome"><svg><use href="#chrome"/></svg></button>
        <button aria-label="DingTalk"><svg><use href="#bird"/></svg></button>
        <button aria-label="Everything"><svg><use href="#search"/></svg></button>
        <button aria-label="Edge"><svg><use href="#edge"/></svg></button>
        <button class="running" aria-label="PDF editor"><svg><use href="#pdf"/></svg></button>
        <button class="running" aria-label="Explorer"><svg><use href="#folder"/></svg></button>
        <button class="running" aria-label="Capture"><svg><use href="#capture"/></svg></button>
        <button class="running focused" aria-label="Allegro"><svg><use href="#logo"/></svg></button>
    </div>
    <div class="tray">
        <svg class="people"><use href="#people"/></svg>
        <span>^</span>
        <svg><use href="#keyboard"/></svg>
        <svg><use href="#speaker"/></svg>
        <span>中</span>
        <svg><use href="#sogou"/></svg>
        <div class="clock"><time>14:34</time><time>2020/6/24</time></div>
        <svg><use href="#notice"/></svg>
    </div>
    <span class="watermark">https://blog.csdn.net/sinat_15677011</span>
</div>

</body>
</html>
```
FILE: styles.css
```css
* { box-sizing: border-box; }
body {
    margin: 0;
    height: 100vh;
    display: flex;
    flex-direction: column;
    overflow: hidden;
    background: #efefef;
    color: #111;
    font-family: "Liberation Mono", monospace;
    font-size: 7px;
    line-height: 9px;
}
button, input, select { font: inherit; color: inherit; margin: 0; padding: 0; border-radius: 0; }
button { background: none; border: 0; }
h2, p { margin: 0; font: inherit; }
svg { display: block; }
.defs { position: absolute; width: 0; height: 0; }
.digits { font: bold 7px "Liberation Sans", sans-serif; fill: #333; }
.letters { font: bold 7px "Liberation Sans", sans-serif; fill: #777; }

/* title and menu */
.titlebar { display: flex; align-items: center; height: 15px; background: #fff; font: 9px/15px Lato, sans-serif; }
.app-logo { width: 11px; height: 11px; margin: 0 2px; }
.window-buttons { display: flex; gap: 22px; margin-left: auto; padding-right: 13px; }
.window-buttons svg { width: 8px; height: 8px; }
.menubar { display: flex; align-items: center; gap: 10px; height: 15px; padding: 0 3px 0 5px; background: #fff; font: 9px/15px Lato, sans-serif; }
.menubar a { color: inherit; text-decoration: none; }
.brand { margin-left: auto; font: bold 9px/12px "Noto Sans", sans-serif; }
.macron { display: inline-block; line-height: 6px; border-top: 1px solid #d22; }

/* toolbars */
.toolbar { display: flex; height: 22px; border-bottom: 1px solid #ccc; }
.menubar + .toolbar { height: 25px; border-top: 2px solid #c80000; }
.group {
    display: flex;
    align-items: center;
    justify-content: space-between;
    padding: 0 4px 0 9px;
    border-right: 1px solid #ccc;
    background: radial-gradient(circle, #aaa 1px, transparent 1px) 2px 2px / 3px 3px repeat-y;
}
.group:last-child { border-right: 0; }
.group svg { width: 14px; height: 14px; flex: none; }
.g-file { width: 70px; }
.g-edit { width: 169px; }
.g-view { width: 222px; }
.g-setup { width: 132px; }
.g-display { width: 132px; }
.g-mode { width: 174px; }
.g-shape { width: 111px; }
.g-dim { width: 70px; }
.g-misc { width: 91px; }
.g-wave { width: 28px; }
.g-signal { width: 112px; }
.g-fab { width: 48px; }
.split { display: flex; align-items: center; width: 24px; justify-content: space-between; }
.split::after { content: ""; border: 3px solid transparent; border-top-color: #111; border-bottom: 0; margin-right: 1px; }
.split.off::after { border-top-color: #888; }

.workspace { flex: 1; min-height: 0; display: grid; grid-template-columns: 24px 240px 1fr 217px; border-top: 1px solid #ddd; }
.side-tools { border-right: 2px solid #dcdcdc; border-bottom: 1px solid #ccc; margin-bottom: 2px; }
.stack {
    display: flex;
    flex-direction: column;
    align-items: center;
    gap: 6px;
    padding: 9px 0 4px;
    border-bottom: 1px solid #ccc;
    background: radial-gradient(circle, #aaa 1px, transparent 1px) 3px 1px / 3px 3px repeat-x;
}
.stack:last-child { border-bottom: 0; }
.stack svg { width: 14px; height: 14px; }

/* docks */
.dock { display: flex; flex-direction: column; min-width: 0; min-height: 0; }
.dock-title { display: flex; align-items: center; gap: 5px; height: 13px; padding: 0 5px 0 10px; }
.dock-title .grip { flex: 1; height: 3px; background: #b9b9b9; margin: 0 4px 0 -4px; }
.dock-title svg { width: 7px; height: 7px; }
.dock-left { padding: 0 7px 5px 0; }
.dock-left .dock-title { flex: none; padding-right: 3px; }
.visibility { height: 233px; padding: 13px 3px 0 5px; display: flex; flex-direction: column; }
.global-row { display: grid; grid-template-columns: minmax(0, 1fr) 48px 48px 48px; gap: 4px; align-items: center; white-space: nowrap; }
.btn { height: 14px; border: 1px solid #adadad; background: #e1e1e1; }
.view-row { display: grid; grid-template-columns: 72px 1fr; align-items: center; margin-top: 4px; }
select {
    appearance: none;
    height: 14px;
    border: 1px solid #888;
    padding: 0 10px 0 2px;
    background: #fff url("data:image/svg+xml,%3Csvg xmlns='http://www.w3.org/2000/svg' width='8' height='6'%3E%3Cpath d='M1 1l3 3 3-3' fill='none' stroke='%23555'/%3E%3C/svg%3E") no-repeat right 1px center;
}
.combo-solid {
    border-color: #adadad;
    background: #e1e1e1 url("data:image/svg+xml,%3Csvg xmlns='http://www.w3.org/2000/svg' width='8' height='6'%3E%3Cpath d='M1 1h6L4 5z'/%3E%3C/svg%3E") no-repeat right 2px center;
}
input[type="checkbox"] {
    appearance: none;
    flex: none;
    display: block;
    width: 9px;
    height: 9px;
    border: 1px solid #444;
    background: #fff;
}
input[type="checkbox"]:checked {
    background: #fff url("data:image/svg+xml,%3Csvg xmlns='http://www.w3.org/2000/svg' width='7' height='7'%3E%3Cpath d='M1 3.500l2 2 3.500-4' fill='none' stroke='%23333'/%3E%3C/svg%3E") no-repeat center;
}
input[type="checkbox"]:disabled { border-color: #ccc; }
label { display: flex; align-items: center; gap: 2px; white-space: nowrap; }
.layers { width: 100%; margin-top: 11px; border-collapse: collapse; table-layout: fixed; }
.layers th, .layers td { width: 16px; height: 13px; padding: 0; font-weight: normal; text-align: center; }
.layers th { text-decoration: underline; }
.layers th:nth-child(2), .layers th:nth-child(3) { width: 19px; }
.layers .name { width: auto; text-align: left; }
.layers td > input, .layers td > .swatch { margin: 0 auto; }
.layers .first td { height: 17px; padding-top: 4px; }
.colors { border-top: 2px solid #a0a0a0; }
.colors .current { background: #e0e0e0; }
.swatch { display: block; width: 11px; height: 11px; border: 1px solid #999; box-shadow: inset 0 0 0 1px #ddd; }
.green { background: #1cff1c; }
.yellow { background: #ff0; }
.red { background: #f00; }
.olive { background: #5e8c32; }
.layer-select { margin: auto 0 9px 57px; }
.overview { height: 66px; margin: 2px 0 6px 2px; background: #000; border: 1px solid #888; flex: none; }
.console {
    flex: 1;
    min-height: 0;
    display: grid;
    grid-template: 1fr 11px / 1fr 8px;
    margin: 6px 0 0 5px;
    border: 1px solid #828790;
    background: #fff;
}
.log { display: flex; flex-direction: column; justify-content: space-between; padding: 1px 0 1px 1px; white-space: pre; overflow: hidden; min-width: 0; }
.log p { height: 9px; }
.vscroll { display: flex; flex-direction: column; align-items: center; background: #f0f0f0; padding: 4px 0; }
.vscroll .thumb { width: 100%; background: #cdcdcd; }
.console .vscroll .thumb { height: 12px; margin: auto 0 2px; }
.hscroll { display: flex; align-items: center; background: #f0f0f0; padding: 0 4px; }
.console .hscroll .thumb { width: 101px; height: 11px; margin: 0 auto 0 3px; background: linear-gradient(90deg, #cdcdcd 46%, #f0f0f0 46%, #f0f0f0 53%, #cdcdcd 53%); }
.arrow { width: 4px; height: 4px; flex: none; border: solid #555; border-width: 1px 0 0 1px; transform: rotate(45deg); }
.arrow.down { transform: rotate(225deg); }
.arrow.left { transform: rotate(-45deg); }
.arrow.right { transform: rotate(135deg); }
.prompt { display: flex; align-items: center; flex: none; height: 14px; margin: 5px 0 0 5px; padding-right: 4px; border: 1px solid #828790; background: #fff; }
.prompt label { width: 41px; height: 12px; border-right: 1px solid #555; }
.prompt input { flex: 1; min-width: 0; border: 0; }

/* drawing area */
.editor { display: flex; flex-direction: column; min-width: 0; min-height: 0; padding-bottom: 3px; }
.tabs { display: flex; align-items: flex-end; height: 19px; padding-top: 5px; flex: none; border-bottom: 1px solid #666; }
.tabs button { height: 12px; width: 54px; }
.tabs .active { height: 13px; width: 97px; background: #fff; border: 1px solid #ddd; border-bottom: 0; }
.board { flex: 1; min-height: 0; width: 100%; background: #000; }
.trace { fill: none; stroke: #486a2a; }
.pads { fill: none; stroke: #55803a; }
.dots { fill: #35501f; }
.faint { opacity: 0.7; }
.vias { stroke: #6a8055; stroke-width: 1; stroke-dasharray: 1 10.450; }
.highlight { stroke: #bbb; stroke-dasharray: 6 6; }
.hole { fill: none; stroke: #d00000; }

/* right side */
.dock-right { padding: 0 0 1px 5px; }
.options, .find { font: 8px/10px "Liberation Sans", sans-serif; border: 1px solid #a0a0a8; }
.options { height: 279px; flex: none; padding: 16px 0 0 10px; }
fieldset { margin: 0; padding: 0; border: 1px solid #ddd; min-width: 0; }
legend { margin-left: 4px; padding: 0 1px; }
.line-box legend { margin-left: -5px; }
.line-box { width: 127px; height: 105px; margin-left: -4px; padding: 11px 8px 0 9px; display: flex; flex-direction: column; }
.line-box > label { height: 15px; }
.field { display: flex; align-items: center; justify-content: space-between; height: 17px; padding-left: 12px; }
.options input[type="text"] { width: 44px; height: 14px; border: 1px solid #ccc; border-top-color: #888; border-left-color: #888; background: #efefef; color: #888; padding: 0 2px; }
.line-box + label { margin-top: 14px; }
.choice { position: relative; display: flex; align-items: center; height: 22px; padding-left: 14px; }
.choice select { width: 101px; }
.choice .grey { background-color: #e1e1e1; }
.choice .with-chip { padding-left: 10px; }
.choice .swatch { width: 9px; height: 9px; margin: 0 5px 0 -14px; }
.choice .chip { position: absolute; left: 17px; width: 5px; height: 7px; background: #5e8c32; border: 1px solid #333; }
.net-row { display: flex; gap: 8px; margin-top: 4px; }
.options .net-row input { width: 54px; }
.net-row button { width: 13px; height: 14px; background: #ccc; border: 1px solid #bbb; color: #888; }
.find-title { margin-top: 4px; flex: none; }
.find { flex: 1; min-height: 0; display: flex; overflow: hidden; }
.find-body { flex: 1; padding-left: 6px; }
.filter { width: 127px; }
.all-row { display: flex; gap: 8px; padding: 4px 0 1px 4px; }
.all-row .btn { height: 11px; line-height: 9px; width: 30px; }
.all-row .btn + .btn { width: 32px; }
.filter-grid { display: grid; grid-template-columns: 56px 1fr; grid-auto-rows: 16px; padding-left: 4px; white-space: nowrap; }
.find label:has(:disabled) { color: #888; }
.saved { border-top: 1px solid #ddd; margin-top: 1px; padding: 9px 4px; }
.saved select { display: block; width: 82px; margin-top: 5px; background-color: #ccc; border-color: #bfbfbf; }
.query { display: block; width: 83px; height: 15px; margin: 10px 0 17px 5px; }
.by-name { width: 127px; height: 20px; }
.find .vscroll { width: 11px; }
.find .vscroll .thumb { height: 213px; margin: 12px 0 auto; background: linear-gradient(#cdcdcd 48%, #f0f0f0 48%, #f0f0f0 51%, #cdcdcd 51%); }

.statusbar { display: grid; grid-template-columns: 110fr 112fr 110fr 111fr 113fr 60fr 109fr 110fr 111fr 112fr 110fr 110fr; height: 18px; padding: 1px 0; line-height: 16px; white-space: nowrap; }
.statusbar > span { border-right: 1px solid #ddd; padding-left: 2px; }
.statusbar .ok { background: #0f0; border: solid #efefef; border-width: 0 2px; padding-left: 1px; }
.keys { display: flex; gap: 5px; align-items: center; }
.keys button { width: 14px; height: 14px; border: 1px solid #bbb; background: #e4e4e4; line-height: 11px; }

.taskbar { position: relative; display: flex; justify-content: space-between; height: 27px; background: linear-gradient(90deg, #0f0f0f 42%, #383838 60%, #383838 94%, #151515); color: #fff; }
.apps { display: flex; width: 456px; }
.apps button { flex: 1; display: flex; align-items: center; justify-content: center; border-bottom: 2px solid transparent; background-clip: padding-box; }
.apps svg { width: 15px; height: 15px; }
.apps .running { border-image: linear-gradient(90deg, transparent 10%, #76b9ed 10%, #76b9ed 90%, transparent 90%) 1; }
.apps .focused { background: #444; border-image: none; border-bottom-color: #76b9ed; }
.youdao { width: 16px; height: 15px; border-radius: 2px; background: #e21f26; font: bold 7px/15px "Noto Sans CJK SC", sans-serif; }
.tray { display: flex; align-items: center; gap: 5px; padding-right: 15px; font: 9px/12px "Noto Sans", "Noto Sans CJK SC", sans-serif; }
.tray svg { width: 14px; height: 14px; }
.tray .people { margin-right: 9px; }
.clock { width: 50px; margin-right: 1px; text-align: center; }
.clock time { display: block; }
.watermark { position: absolute; right: 4px; top: 7px; font: 11px/13px "Liberation Sans", sans-serif; color: rgba(255, 255, 255, 0.55); }
```
